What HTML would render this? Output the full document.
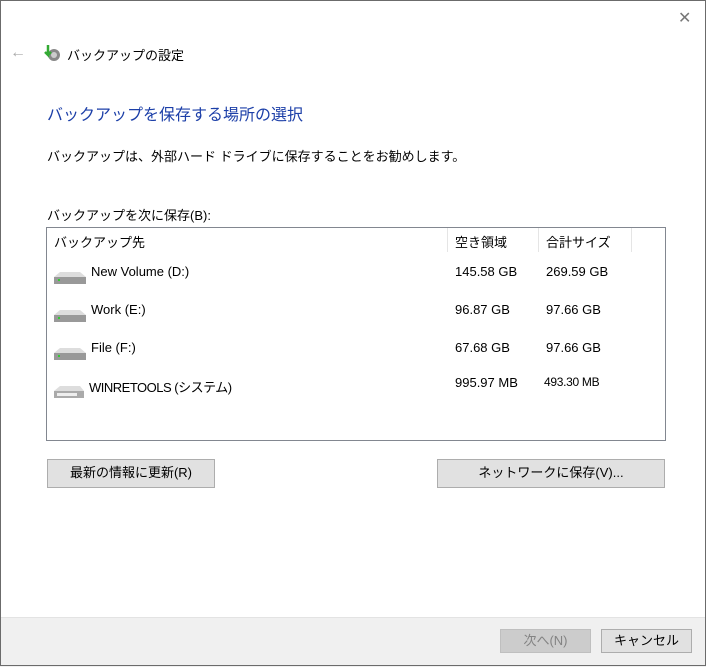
<!DOCTYPE html><html><head><meta charset="utf-8"><style>
body{margin:0;width:706px;height:666px;overflow:hidden;font-family:"Liberation Sans","Noto Sans CJK JP",sans-serif;font-size:13px;color:#000;position:relative;background:#fff}
.a{position:absolute;white-space:nowrap;}
.frame{position:absolute;left:0;top:0;width:704px;height:664px;border:1px solid #6b6b6b;z-index:5;pointer-events:none}
.foot{position:absolute;left:0;top:617px;width:706px;height:49px;background:#f0f0f0;border-top:1px solid #e3e3e3;}
.btn{position:absolute;background:#e1e1e1;border:1px solid #adadad;text-align:center;line-height:26px;box-sizing:border-box;}
.drv{position:absolute;width:32px;height:16px;}
</style></head><body>
<div class="frame"></div>
<div class="a" style="left:678px;top:8px;color:#777;font-size:16px">✕</div>
<div class="a" style="left:10px;top:44px;color:#aaa;font-size:16px">←</div>
<svg class="a" style="left:42px;top:43px" width="20" height="20"><circle cx="12" cy="12" r="6" fill="#888"/><circle cx="12" cy="12" r="3" fill="#ccc"/><path d="M6 2v10l-3-3M6 12l3-3" stroke="#3a3" stroke-width="2.5" fill="none"/></svg>
<div class="a" style="left:67px;top:45px;font-size:13px">バックアップの設定</div>
<div class="a" style="left:47px;top:101px;font-size:16px;color:#1c3fa8">バックアップを保存する場所の選択</div>
<div class="a" style="left:47px;top:146px">バックアップは、外部ハード ドライブに保存することをお勧めします。</div>
<div class="a" style="left:47px;top:205px">バックアップを次に保存(B):</div>
<div class="a" style="left:46px;top:227px;width:618px;height:212px;border:1px solid #828790"></div>
<div class="a" style="left:54px;top:232px">バックアップ先</div>
<div class="a" style="left:447px;top:228px;width:1px;height:24px;background:#e5e5e5"></div>
<div class="a" style="left:538px;top:228px;width:1px;height:24px;background:#e5e5e5"></div>
<div class="a" style="left:631px;top:228px;width:1px;height:24px;background:#e5e5e5"></div>
<div class="a" style="left:455px;top:232px">空き領域</div>
<div class="a" style="left:546px;top:232px">合計サイズ</div>
<div class="drv" style="left:53px;top:270px"><svg width="34" height="16"><path d="M1 7L7 2H27L33 7Z" fill="#ddd"/><rect x="1" y="7" width="32" height="7" fill="#999"/><rect x="5" y="9" width="2" height="2" fill="#3c3"/></svg></div>
<div class="drv" style="left:53px;top:308px"><svg width="34" height="16"><path d="M1 7L7 2H27L33 7Z" fill="#ddd"/><rect x="1" y="7" width="32" height="7" fill="#999"/><rect x="5" y="9" width="2" height="2" fill="#3c3"/></svg></div>
<div class="drv" style="left:53px;top:346px"><svg width="34" height="16"><path d="M1 7L7 2H27L33 7Z" fill="#ddd"/><rect x="1" y="7" width="32" height="7" fill="#999"/><rect x="5" y="9" width="2" height="2" fill="#3c3"/></svg></div>
<div class="drv" style="left:53px;top:384px"><svg width="34" height="16"><path d="M1 7L7 2H27L31 7Z" fill="#ddd"/><rect x="1" y="7" width="30" height="7" fill="#aaa"/><rect x="4" y="9" width="20" height="3" fill="#eee"/></svg></div>
<div class="a" style="left:91px;top:264px">New Volume (D:)</div>
<div class="a" style="left:91px;top:302px">Work (E:)</div>
<div class="a" style="left:91px;top:340px">File (F:)</div>
<div class="a" style="left:89px;top:377px;letter-spacing:-0.5px">WINRETOOLS (システム)</div>
<div class="a" style="left:455px;top:264px">145.58 GB</div><div class="a" style="left:546px;top:264px">269.59 GB</div>
<div class="a" style="left:455px;top:302px">96.87 GB</div><div class="a" style="left:546px;top:302px">97.66 GB</div>
<div class="a" style="left:455px;top:340px">67.68 GB</div><div class="a" style="left:546px;top:340px">97.66 GB</div>
<div class="a" style="left:455px;top:375px">995.97 MB</div><div class="a" style="left:544px;top:375px;font-size:12px;letter-spacing:-0.3px">493.30 MB</div>
<div class="btn" style="left:47px;top:459px;width:168px;height:29px">最新の情報に更新(R)</div>
<div class="btn" style="left:437px;top:459px;width:228px;height:29px">ネットワークに保存(V)...</div>
<div class="foot"></div>
<div class="btn" style="left:500px;top:629px;width:91px;height:24px;line-height:22px;background:#ccc;border-color:#bfbfbf;color:#838383">次へ(N)</div>
<div class="btn" style="left:601px;top:629px;width:91px;height:24px;line-height:22px">キャンセル</div>
</body></html>
